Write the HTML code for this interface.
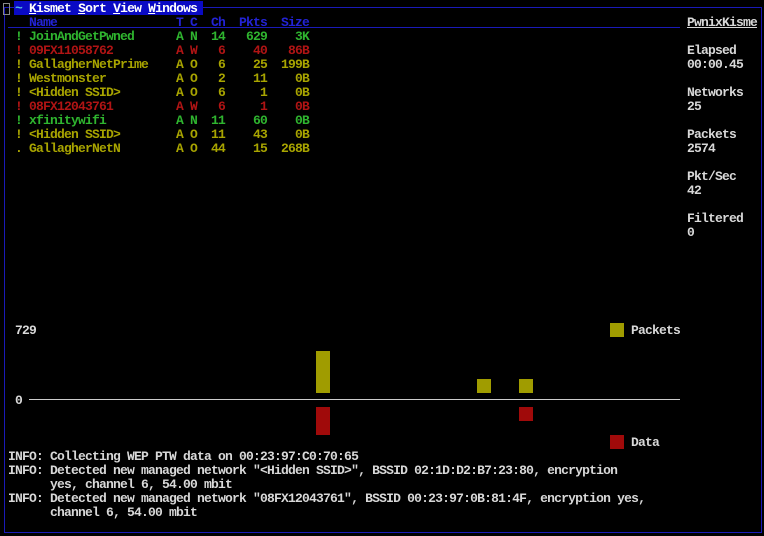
<!DOCTYPE html>
<html><head><meta charset="utf-8"><style>
html,body{margin:0;padding:0;background:#000;width:764px;height:536px;overflow:hidden;position:relative}
pre,.t{position:absolute;margin:0;font-family:"Liberation Mono","DejaVu Sans Mono",monospace;font-weight:bold;font-size:13px;letter-spacing:-0.8px;line-height:14px;white-space:pre}
.g{color:#2fb52f}.r{color:#b01414}.y{color:#a8a400}.w{color:#d8d8d8}.b{color:#2323d6}
.box{position:absolute}
u{text-decoration:underline}
</style></head><body>
<div class="box" style="left:4px;top:7px;width:1px;height:526px;background:#1a1ab8"></div>
<div class="box" style="left:761px;top:7px;width:1px;height:526px;background:#1a1ab8"></div>
<div class="box" style="left:4px;top:532px;width:758px;height:1px;background:#1a1ab8"></div>
<div class="box" style="left:4px;top:7px;width:10px;height:1px;background:#1a1ab8"></div>
<div class="box" style="left:203px;top:7px;width:558px;height:1px;background:#1a1ab8"></div>
<div class="box" style="left:8px;top:27px;width:672px;height:1px;background:#1a1ab8"></div>
<div class="box" style="left:3px;top:3px;width:5px;height:10px;border:1px solid #888"></div>
<div class="box" style="left:14px;top:1px;width:189px;height:14px;background:#0a0ac4"></div>
<pre style="left:15px;top:2px;color:#fff"><span style="color:#5bd">~</span> <u>K</u>ismet <u>S</u>ort <u>V</u>iew <u>W</u>indows</pre>
<pre style="left:15px;top:16px" class="b">  Name                 T C  Ch  Pkts  Size</pre>
<pre style="left:15px;top:30px"><span class="g">! JoinAndGetPwned      A N  14   629    3K</span>
<span class="r">! 09FX11058762         A W   6    40   86B</span>
<span class="y">! GallagherNetPrime    A O   6    25  199B</span>
<span class="y">! Westmonster          A O   2    11    0B</span>
<span class="y">! &lt;Hidden SSID&gt;        A O   6     1    0B</span>
<span class="r">! 08FX12043761         A W   6     1    0B</span>
<span class="g">! xfinitywifi          A N  11    60    0B</span>
<span class="y">! &lt;Hidden SSID&gt;        A O  11    43    0B</span>
<span class="y">. GallagherNetN        A O  44    15  268B</span></pre>
<pre style="left:687px;top:16px" class="w"><u>PwnixKisme</u>

Elapsed
00:00.45

Networks
25

Packets
2574

Pkt/Sec
42

Filtered
0</pre>
<pre style="left:15px;top:324px" class="w">729</pre>
<pre style="left:15px;top:394px" class="w">0</pre>
<div class="box" style="left:29px;top:399px;width:651px;height:1px;background:#ccc"></div>
<div class="box" style="left:316px;top:351px;width:14px;height:42px;background:#a09c00"></div>
<div class="box" style="left:477px;top:379px;width:14px;height:14px;background:#a09c00"></div>
<div class="box" style="left:519px;top:379px;width:14px;height:14px;background:#a09c00"></div>
<div class="box" style="left:316px;top:407px;width:14px;height:28px;background:#a00a0a"></div>
<div class="box" style="left:519px;top:407px;width:14px;height:14px;background:#a00a0a"></div>
<div class="box" style="left:610px;top:323px;width:14px;height:14px;background:#a09c00"></div>
<div class="box" style="left:610px;top:435px;width:14px;height:14px;background:#a00a0a"></div>
<pre style="left:631px;top:324px" class="w">Packets</pre>
<pre style="left:631px;top:436px" class="w">Data</pre>
<pre style="left:8px;top:450px" class="w">INFO: Collecting WEP PTW data on 00:23:97:C0:70:65
INFO: Detected new managed network "&lt;Hidden SSID&gt;", BSSID 02:1D:D2:B7:23:80, encryption
      yes, channel 6, 54.00 mbit
INFO: Detected new managed network "08FX12043761", BSSID 00:23:97:0B:81:4F, encryption yes,
      channel 6, 54.00 mbit</pre>
</body></html>
